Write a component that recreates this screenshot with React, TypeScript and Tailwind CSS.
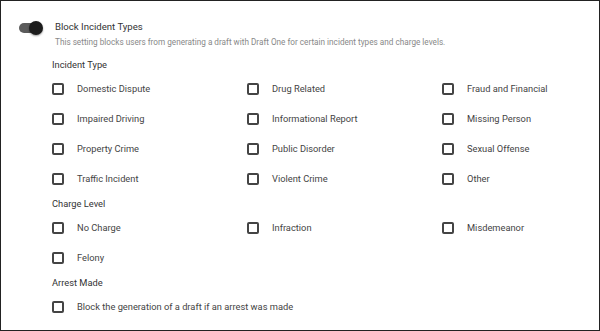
import React from 'react';

const incidentTypes = [
  'Domestic Dispute',
  'Drug Related',
  'Fraud and Financial',
  'Impaired Driving',
  'Informational Report',
  'Missing Person',
  'Property Crime',
  'Public Disorder',
  'Sexual Offense',
  'Traffic Incident',
  'Violent Crime',
  'Other',
];

const chargeLevels = ['No Charge', 'Infraction', 'Misdemeanor', 'Felony'];

function Check({ label }: { label: string }) {
  return (
    <label className="flex h-[30px] items-center gap-[13px]">
      <span className="block h-[12px] w-[12px] shrink-0 rounded-[2px] border-2 border-[#444]" />
      <span className="text-[9.3px] text-[#444]">{label}</span>
    </label>
  );
}

function SectionLabel({ children }: { children: React.ReactNode }) {
  return <div className="flex h-[19px] items-center text-[9.3px] text-[#333]">{children}</div>;
}

export default function App() {
  return (
    <div
      className="h-[331px] w-[600px] border border-[#222] bg-white"
      style={{ fontFamily: 'Roboto, "Liberation Sans", sans-serif' }}
    >
      <div className="flex gap-[12px] pl-[18px] pt-[19px]">
        <div className="relative mt-[1px] h-[14px] w-[24px]">
          <div className="absolute left-0 top-[2px] h-[10px] w-[20px] rounded-full bg-[#5b5b5b]" />
          <div className="absolute left-[10px] top-0 h-[14px] w-[14px] rounded-full bg-[#1c1c1c] shadow-[0_1px_2px_rgba(0,0,0,0.4)]" />
        </div>
        <div>
          <div className="h-[14px] text-[9.6px] leading-[14px] text-[#333]">Block Incident Types</div>
          <div className="mt-[3px] h-[10px] text-[8.2px] leading-[10px] text-[#888]">
            This setting blocks users from generating a draft with Draft One for certain incident types and charge levels.
          </div>
        </div>
      </div>

      <div className="pl-[51px] pt-[8px]">
        <SectionLabel>Incident Type</SectionLabel>
        <div className="grid grid-cols-[195px_195px_1fr]">
          {incidentTypes.map((t) => (
            <Check key={t} label={t} />
          ))}
        </div>

        <SectionLabel>Charge Level</SectionLabel>
        <div className="grid grid-cols-[195px_195px_1fr]">
          {chargeLevels.map((t) => (
            <Check key={t} label={t} />
          ))}
        </div>

        <SectionLabel>Arrest Made</SectionLabel>
        <Check label="Block the generation of a draft if an arrest was made" />
      </div>
    </div>
  );
}
